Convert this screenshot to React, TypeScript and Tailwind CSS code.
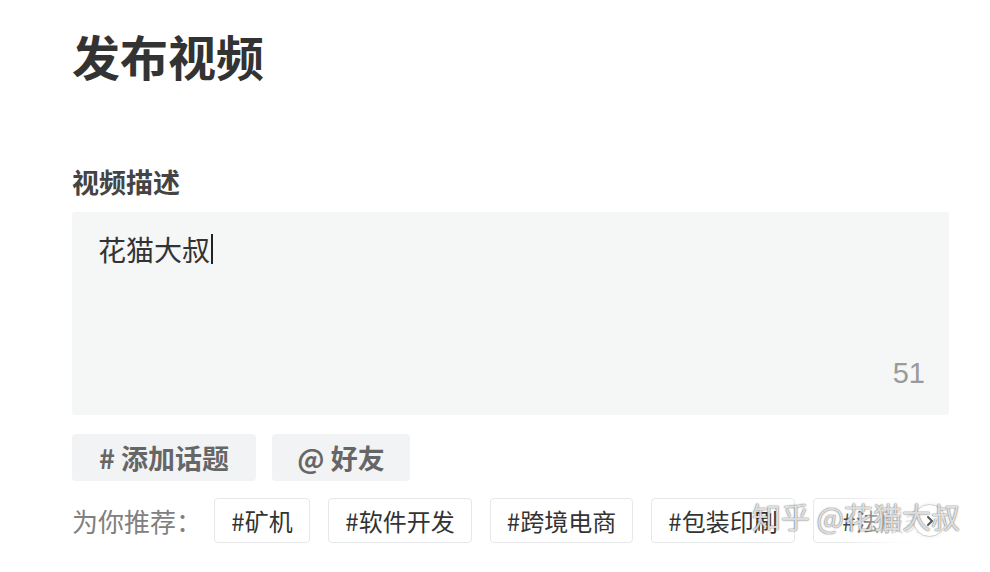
import React from "react";

const FONT = "font-['Noto_Sans_CJK_SC','Microsoft_YaHei',sans-serif]";

function Tag({ label, w }: { label: string; w: string }) {
  return (
    <div
      className={`flex h-[45px] shrink-0 items-center justify-center rounded-[4px] border border-[#e6e7e8] bg-white text-[24px] leading-none text-[#333] ${w}`}
    >
      {label}
    </div>
  );
}

export default function App() {
  return (
    <div
      className={`relative h-[572px] w-[990px] overflow-hidden bg-white pl-[72px] pt-[31px] ${FONT}`}
    >
      <h1 className="text-[48px] font-bold leading-none text-[#333]">发布视频</h1>

      <div className="mt-[89px] text-[27px] font-bold leading-[28px] text-[#444]">视频描述</div>

      <div className="mt-[16px] flex h-[203px] w-[877px] flex-col rounded-[3px] bg-[#f5f6f6] pb-[27px] pl-[26px] pr-[24px] pt-[22px]">
        <div className="flex items-center text-[28px] leading-[28px] text-[#333]">
          <span>花猫大叔</span>
          <span className="ml-[1px] h-[30px] w-[2px] bg-[#222]" />
        </div>
        <div className="mt-auto self-end font-['Liberation_Sans',sans-serif] text-[29px] leading-none text-[#9a9a9a]">
          51
        </div>
      </div>

      <div className="mt-[19px] flex gap-[16px]">
        <div className="flex h-[47px] w-[184px] items-center justify-center rounded-[4px] bg-[#f2f3f4] text-[27px] font-bold leading-none text-[#666]">
          #&nbsp;添加话题
        </div>
        <div className="flex h-[47px] w-[138px] items-center justify-center rounded-[4px] bg-[#f2f3f4] text-[27px] font-bold leading-none text-[#666]">
          @&nbsp;好友
        </div>
      </div>

      <div className="relative mt-[17px] flex w-[878px] items-center overflow-hidden">
        <span className="mr-[12px] shrink-0 text-[26px] leading-none text-[#808080]">为你推荐：</span>
        <div className="flex gap-[18px]">
          <Tag label="#矿机" w="w-[96px]" />
          <Tag label="#软件开发" w="w-[144px]" />
          <Tag label="#跨境电商" w="w-[143px]" />
          <Tag label="#包装印刷" w="w-[144px]" />
          <Tag label="#法服务" w="w-[144px]" />
        </div>
        <div className="absolute right-0 top-0 h-full w-[110px] bg-gradient-to-r from-white/0 via-white/85 to-white" />
        <div className="absolute right-[4px] top-[6px] flex h-[33px] w-[33px] items-center justify-center rounded-full border border-[#cfcfcf] bg-white shadow-[0_0_4px_rgba(0,0,0,0.08)]">
          <svg width="14" height="14" viewBox="0 0 14 14" fill="none">
            <path d="M5 3l4 4-4 4" stroke="#555" strokeWidth="2" strokeLinecap="round" strokeLinejoin="round" />
          </svg>
        </div>
      </div>

      <div className="absolute left-[752px] top-[502px] whitespace-nowrap text-[29px] leading-none text-white/80 [text-shadow:0_0_1px_rgba(0,0,0,0.6),0_0_2px_rgba(0,0,0,0.35)]">
        知乎 @花猫大叔
      </div>
    </div>
  );
}
